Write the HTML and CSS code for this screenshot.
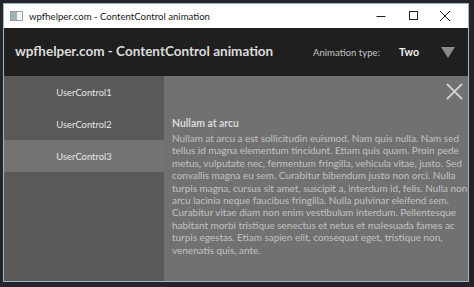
FILE: index.html
```html
<!DOCTYPE html>
<html>
<head>
<meta charset="utf-8">
<link rel="stylesheet" href="styles.css">
</head>
<body>
<div class="window">
  <div class="titlebar">
    <svg class="appicon" width="13" height="10" viewBox="0 0 13 10">
      <rect x="0.5" y="0.5" width="12" height="9" fill="#f4f6f8" stroke="#8fa0a8"/>
      <rect x="1" y="1" width="6" height="8" fill="#9fb2ba"/>
    </svg>
    <span class="wintitle">wpfhelper.com - ContentControl animation</span>
    <div class="controls">
      <svg class="ctl" width="32" height="24" viewBox="0 0 32 24"><line x1="11.5" y1="12.5" x2="20.5" y2="12.5" stroke="#222" stroke-width="1"/></svg>
      <svg class="ctl" width="32" height="24" viewBox="0 0 32 24"><rect x="12.5" y="7.5" width="8" height="8" fill="none" stroke="#222" stroke-width="1"/></svg>
      <svg class="ctl" width="32" height="24" viewBox="0 0 32 24"><path d="M11 7 L21 17 M21 7 L11 17" stroke="#222" stroke-width="1"/></svg>
    </div>
  </div>
  <div class="header">
    <span class="apptitle">wpfhelper.com - ContentControl animation</span>
    <span class="label">Animation type:</span>
    <span class="value">Two</span>
    <svg class="drop" width="14" height="11" viewBox="0 0 14 11"><polygon points="0,0 14,0 7,11" fill="#8a8a8a"/></svg>
  </div>
  <div class="main">
    <div class="sidebar">
      <div class="item">UserControl1</div>
      <div class="item">UserControl2</div>
      <div class="item selected">UserControl3</div>
    </div>
    <div class="content">
      <div class="closerow">
        <svg width="17" height="17" viewBox="0 0 17 17"><path d="M1 1 L16 16 M16 1 L1 16" stroke="#cfcfcf" stroke-width="1.8"/></svg>
      </div>
      <div class="heading">Nullam at arcu</div>
      <p class="body">Nullam at arcu a est sollicitudin euismod. Nam quis nulla. Nam sed<br>tellus id magna elementum tincidunt. Etiam quis quam. Proin pede<br>metus, vulputate nec, fermentum fringilla, vehicula vitae, justo. Sed<br>convallis magna eu sem. Curabitur bibendum justo non orci. Nulla<br>turpis magna, cursus sit amet, suscipit a, interdum id, felis. Nulla non<br>arcu lacinia neque faucibus fringilla. Nulla pulvinar eleifend sem.<br>Curabitur vitae diam non enim vestibulum interdum. Pellentesque<br>habitant morbi tristique senectus et netus et malesuada fames ac<br>turpis egestas. Etiam sapien elit, consequat eget, tristique non,<br>venenatis quis, ante.</p>
    </div>
  </div>
</div>
</body>
</html>
```
FILE: styles.css
```css
html, body {
  margin: 0;
  padding: 0;
  width: 474px;
  height: 287px;
  background: #26232b;
  overflow: hidden;
}
body {
  padding: 3px 0 0 3px;
  box-sizing: border-box;
  font-family: Lato, "Open Sans", sans-serif;
}
.window {
  width: 466px;
  height: 279px;
  border: 1px solid #97b9c0;
  box-sizing: border-box;
  display: flex;
  flex-direction: column;
  background: #595959;
  overflow: hidden;
}
.titlebar {
  height: 24px;
  flex: none;
  background: #ffffff;
  display: flex;
  align-items: center;
}
.appicon {
  margin-left: 6px;
  margin-right: 6px;
  flex: none;
}
.wintitle {
  font-size: 9.6px;
  color: #1a1a1a;
  white-space: nowrap;
}
.controls {
  margin-left: auto;
  display: flex;
  margin-right: 7px;
}
.ctl {
  display: block;
}
.header {
  height: 48px;
  flex: none;
  background: #1f1f1f;
  display: flex;
  align-items: center;
  padding: 0 13px 3px 11px;
  box-sizing: border-box;
}
.apptitle {
  font-weight: bold;
  font-size: 13.5px;
  color: #dcdcdc;
  white-space: nowrap;
}
.label {
  margin-left: auto;
  font-size: 9.6px;
  color: #c4c4c4;
  padding-top: 3px;
}
.value {
  margin-left: 19px;
  font-size: 10.6px;
  font-weight: bold;
  color: #f0f0f0;
  padding-top: 3px;
}
.drop {
  margin-left: 22px;
  margin-top: 3px;
}
.main {
  flex: 1;
  display: flex;
  min-height: 0;
  min-width: 0;
}
.sidebar {
  width: 160px;
  flex: none;
  background: #595959;
  display: flex;
  flex-direction: column;
}
.item {
  height: 32px;
  display: flex;
  align-items: center;
  justify-content: center;
  font-size: 9.4px;
  color: #e6e6e6;
}
.item.selected {
  background: #737373;
}
.content {
  flex: 1;
  min-width: 0;
  overflow: hidden;
  background: #717171;
  padding: 7px 5px 0 8px;
}
.closerow {
  display: flex;
  justify-content: flex-end;
  height: 17px;
}
.heading {
  margin-top: 16px;
  font-weight: bold;
  font-size: 10.4px;
  color: #d8d8d8;
  line-height: 14px;
}
.body {
  margin: 2px 0 0 0;
  font-size: 9.95px;
  line-height: 12.4px;
  color: #c2c2c2;
  white-space: nowrap;
}
```
